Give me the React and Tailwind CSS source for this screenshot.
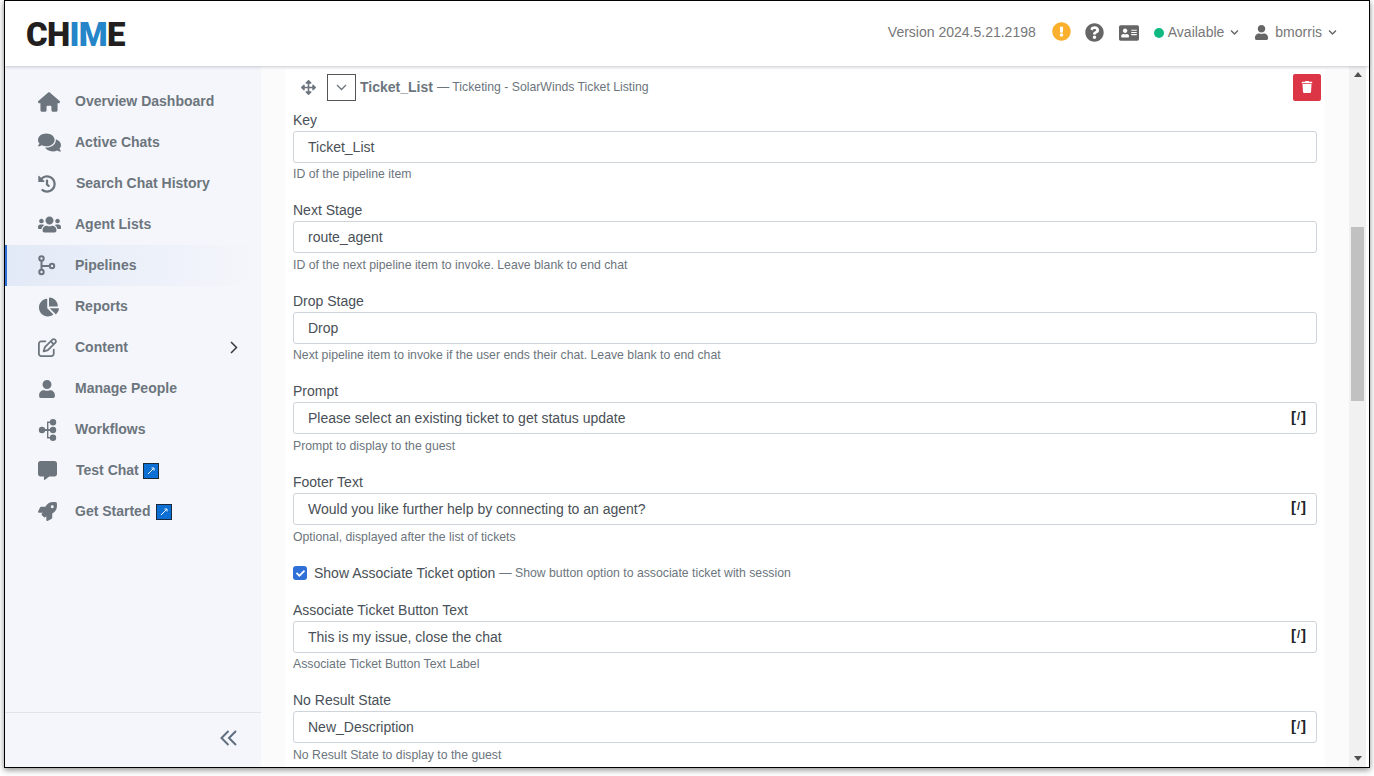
import React from 'react';
import {
  FaComments, FaHistory, FaUsers, FaChartPie, FaUser, FaCommentAlt, FaRocket,
  FaExclamationCircle, FaQuestionCircle, FaAddressCard, FaArrowsAlt, FaTrash,
  FaChevronDown, FaCheck,
} from 'react-icons/fa';
import { FaHouse, FaRegPenToSquare } from 'react-icons/fa6';

const BranchIcon = () => (
  <svg width="18" height="22" viewBox="0 0 18 22" fill="none" stroke="#6c757d" strokeWidth="2">
    <circle cx="3.5" cy="3.500" r="2.2" />
    <circle cx="3.5" cy="17" r="2.2" />
    <circle cx="14" cy="11" r="2.2" />
    <path d="M3.500 6v9M3.500 11h8" />
  </svg>
);

const FlowIcon = () => (
  <svg width="20" height="22" viewBox="0 0 20 22" fill="#6c757d">
    <circle cx="4" cy="11" r="3.2" />
    <circle cx="15" cy="3.2" r="3.2" />
    <circle cx="15" cy="11" r="3.2" />
    <circle cx="15" cy="18.8" r="3.2" />
    <path d="M4 10h5V2.500h4v1.400h-2.600V10H13v2h-2.600v6.100H13v1.400H9V12H4z" />
  </svg>
);

const ExternalBadge = ({ gap }) => (
  <span className={'inline-flex h-4 w-4 items-center justify-center border border-[#1b2a3a] bg-[#0b6fd3] ' + gap}>
    <svg width="10" height="10" viewBox="0 0 10 10" fill="none" stroke="#fff" strokeWidth="1">
      <path d="M2 8 7.500 2.500M5.500 2H8v2.500" />
    </svg>
  </span>
);

const navItems = [
  { label: 'Overview Dashboard', icon: <FaHouse size={22} /> },
  { label: 'Active Chats', icon: <FaComments size={23} /> },
  { label: 'Search Chat History', icon: <FaHistory size={18} />, nudge: true },
  { label: 'Agent Lists', icon: <FaUsers size={23} /> },
  { label: 'Pipelines', icon: <BranchIcon />, active: true },
  { label: 'Reports', icon: <FaChartPie size={20} className="ml-px" /> },
  { label: 'Content', icon: <FaRegPenToSquare size={19} />, arrow: true },
  { label: 'Manage People', icon: <FaUser size={18} /> },
  { label: 'Workflows', icon: <FlowIcon /> },
  { label: 'Test Chat', icon: <FaCommentAlt size={19} />, nudge: true, badge: 'ml-[4px]' },
  { label: 'Get Started', icon: <FaRocket size={19} />, badge: 'ml-[6px]' },
];

const fields = [
  { label: 'Key', value: 'Ticket_List', help: 'ID of the pipeline item' },
  { label: 'Next Stage', value: 'route_agent', help: 'ID of the next pipeline item to invoke. Leave blank to end chat' },
  { label: 'Drop Stage', value: 'Drop', help: 'Next pipeline item to invoke if the user ends their chat. Leave blank to end chat' },
  { label: 'Prompt', value: 'Please select an existing ticket to get status update', help: 'Prompt to display to the guest', token: true },
  { label: 'Footer Text', value: 'Would you like further help by connecting to an agent?', help: 'Optional, displayed after the list of tickets', token: true },
];

const fieldsAfter = [
  { label: 'Associate Ticket Button Text', value: 'This is my issue, close the chat', help: 'Associate Ticket Button Text Label', token: true },
  { label: 'No Result State', value: 'New_Description', help: 'No Result State to display to the guest', token: true },
];

function Field({ label, value, help, token }) {
  return (
    <div className="mb-[17px]">
      <label className="block text-[14px] leading-[21px] text-[#495057]">{label}</label>
      <div className="relative">
        <input
          readOnly
          value={value}
          className="block h-[32px] w-full rounded-[3px] border border-[#ced4da] bg-white pl-[14px] pr-10 text-[14px] text-[#495057] outline-none"
        />
        {token && (
          <span className="absolute right-[11px] top-[5px] flex h-[18px] items-center text-[15px] font-bold leading-none text-[#212529]">
            [<span className="px-px text-[11px] font-bold">/</span>]
          </span>
        )}
      </div>
      <div className="mt-[2.6px] text-[12.25px] leading-[18px] text-[#6c757d]">{help}</div>
    </div>
  );
}

function NavRow({ item }) {
  return (
    <div
      className={
        'flex h-[41px] items-center border-l-2 pl-[31px] pr-[23px] ' +
        (item.active ? 'border-[#2f6fd8] bg-gradient-to-r from-[#e2eaf7] to-[#f5f6fb]' : 'border-transparent')
      }
    >
      <span className="flex w-[37px] shrink-0 items-center text-[#6c757d]">{item.icon}</span>
      <span className={'text-[14px] font-bold text-[#6c757d] ' + (item.nudge ? 'ml-px' : '')}>{item.label}</span>
      {item.badge && <ExternalBadge gap={item.badge} />}
      {item.arrow && (
        <svg width="8" height="13" viewBox="0 0 8 13" fill="none" stroke="#343a40" strokeWidth="1.5" className="ml-auto">
          <path d="M1 1l5.500 5.500L1 12" />
        </svg>
      )}
    </div>
  );
}

export default function App() {
  return (
    <div className="h-[776px] w-[1374px] overflow-hidden bg-white pl-[4px] font-['Liberation_Sans',Arial,sans-serif]">
      <div className="flex h-[768px] w-[1366px] flex-col border border-black bg-white shadow-[0_2px_6px_rgba(0,0,0,0.45)]">
        <header className="z-10 flex h-[65px] shrink-0 items-center bg-white pl-[21px] pr-[32px] shadow-[0_1px_3px_rgba(60,60,90,0.25)]">
          <div className="mt-px font-['Roboto',sans-serif] text-[33px] font-black leading-none tracking-[-0.7px] text-[#231f20]">
            CH<span className="text-[#2585c9]">IM</span>E
          </div>
          <div className="mb-[2px] ml-auto flex items-center text-[14px] text-[#777]">
            <span>Version 2024.5.21.2198</span>
            <FaExclamationCircle size={19} className="ml-[16px] -translate-y-px text-[#fbb02d]" />
            <FaQuestionCircle size={19} className="ml-[14px] text-[#666]" />
            <FaAddressCard size={20} className="ml-[15px] text-[#666]" />
            <span className="ml-[15px] h-[10px] w-[10px] rounded-full bg-[#10b981]" />
            <span className="ml-[4px]">Available</span>
            <FaChevronDown size={9} className="ml-[6px] text-[#666]" />
            <FaUser size={15} className="ml-[15px] text-[#666]" />
            <span className="ml-[6px]">bmorris</span>
            <FaChevronDown size={9} className="ml-[6px] text-[#666]" />
          </div>
        </header>

        <div className="flex min-h-0 flex-1">
          <aside className="flex w-[256px] shrink-0 flex-col bg-[#f5f6fb]">
            <nav className="flex-1 pt-[15px]">
              {navItems.map((item) => (
                <NavRow key={item.label} item={item} />
              ))}
            </nav>
            <div className="flex h-[55px] shrink-0 items-center justify-end border-t border-[#e2e4ea] pb-[4px] pr-[23px]">
              <svg width="18" height="16" viewBox="0 0 18 16" fill="none" stroke="#5f6f80" strokeWidth="2">
                <path d="M8.500 1 1.500 8l7 7M16 1 9 8l7 7" />
              </svg>
            </div>
          </aside>

          <main className="min-w-0 flex-1 overflow-hidden bg-[#fbfbfb] px-[24px] pt-[3px]">
            <div className="h-[800px] bg-white px-[8px] pt-[1px]">
              <div className="mb-[5.6px] flex h-[34px] items-center">
                <FaArrowsAlt size={15} className="ml-[8px] text-[#6c757d]" />
                <button className="ml-[11px] flex h-[27px] w-[29px] items-center justify-center border border-[#555] bg-white">
                  <svg width="11" height="7" viewBox="0 0 11 7" fill="none" stroke="#6c757d" strokeWidth="1.300">
                    <path d="M1 1l4.500 4.500L10 1" />
                  </svg>
                </button>
                <span className="ml-[4px] text-[14px] font-bold text-[#6c757d]">Ticket_List</span>
                <span className="ml-[4px] text-[12.25px] text-[#6c757d]">— Ticketing - SolarWinds Ticket Listing</span>
                <button className="ml-auto mr-[-4px] flex h-[27px] w-[28px] items-center justify-center rounded-[2px] bg-[#dc3545]">
                  <FaTrash size={12} className="text-white" />
                </button>
              </div>
              {fields.map((f) => (
                <Field key={f.label} {...f} />
              ))}
              <div className="mb-[16.2px] flex h-[21px] items-center text-[14px] text-[#495057]">
                <span className="mr-[7px] flex h-[14px] w-[14px] items-center justify-center rounded-[3px] bg-[#2f6fd8]">
                  <FaCheck size={9} className="text-white" />
                </span>
                <span>Show Associate Ticket option</span>
                <span className="ml-[4px] text-[12.25px] text-[#6c757d]">— Show button option to associate ticket with session</span>
              </div>
              {fieldsAfter.map((f) => (
                <Field key={f.label} {...f} />
              ))}
            </div>
          </main>

          <div className="flex w-[17px] shrink-0 flex-col items-center bg-[#f1f1f1]">
            <div className="flex h-[17px] w-full items-center justify-center">
              <span className="h-0 w-0 border-x-[4px] border-b-[5px] border-x-transparent border-b-[#505050]" />
            </div>
            <div className="mt-[144px] h-[174px] w-[13px] bg-[#c1c1c1]" />
            <div className="mt-auto flex h-[17px] w-full items-center justify-center">
              <span className="h-0 w-0 border-x-[4px] border-t-[5px] border-x-transparent border-t-[#505050]" />
            </div>
          </div>
          <div className="w-[3px] shrink-0 bg-white" />
        </div>
      </div>
    </div>
  );
}
